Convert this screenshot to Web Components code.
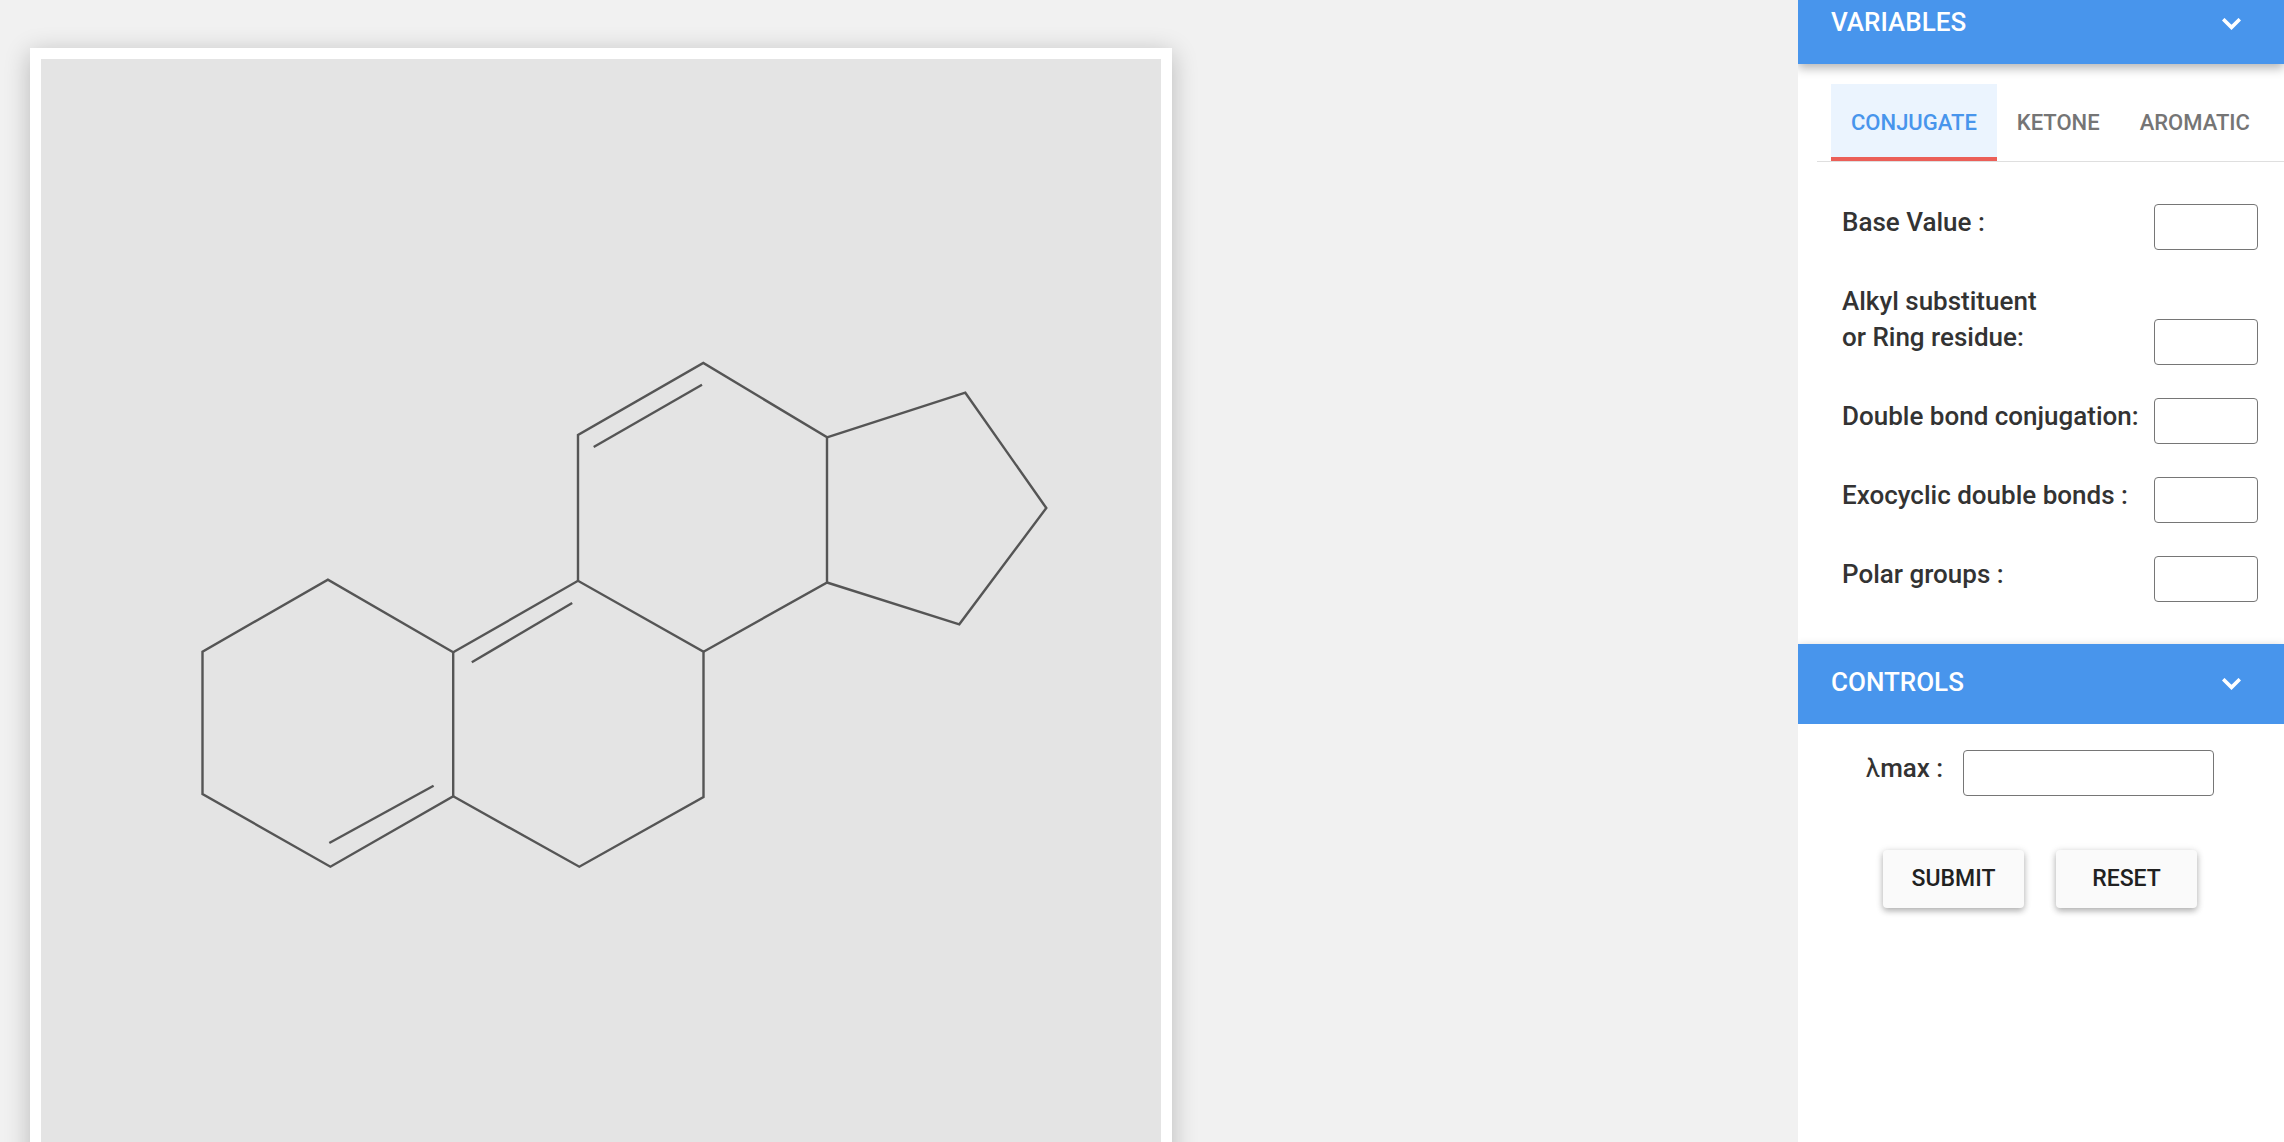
<!DOCTYPE html>
<html lang="en">
<head>
<meta charset="utf-8">
<title>Molecule workbench</title>
<style>
  html, body { height: 100%; }
  body {
    margin: 0;
    overflow: hidden;
    background: #f1f1f1;
    color: #333;
    font-family: Roboto, sans-serif;
    font-weight: 500;
    font-size: 26px;
    line-height: 36px;
  }
</style>
</head>
<body>
<lab-app></lab-app>

<script>
const define = (name, html, setup) => {
  const template = document.createElement('template');
  template.innerHTML = `<style>*, ::before, ::after { box-sizing: border-box; }</style>` + html;
  customElements.define(name, class extends HTMLElement {
    constructor() {
      super();
      this.attachShadow({ mode: 'open' }).append(template.content.cloneNode(true));
    }
    connectedCallback() {
      if (setup) setup(this, this.shadowRoot);
    }
  });
};

/* Square drawing sheet with the steroid skeleton */
define('molecule-board', `
  <style>
    :host {
      display: block;
      width: 50%;
      background: #e4e4e4;
      border: 11px solid #fff;
      box-shadow: 0 5px 24px rgba(0,0,0,.24);
      box-sizing: border-box;
    }
    svg { display: block; width: 100%; }
    path { fill: none; stroke: #555; stroke-width: 2.4; }
  </style>
  <svg viewBox="41 59 1120 1120" role="img" aria-label="Molecule">
    <path d="M453.2 652.3 327.9 579.7 202.5 651.7V794L330.4 866.7 453.2 796.3Z"/>
    <path d="M329.3 843 433.6 785.7"/>
    <path d="M453.2 652.3 578 580.8 703.5 651.8V797L579.3 866.7 453.2 796.3"/>
    <path d="M471.8 662.3 572.2 603"/>
    <path d="M578 580.8V435L703.3 363 827 437.3V582.5L703.5 651.8"/>
    <path d="M593.7 447 702 384.7"/>
    <path d="M827 437.3 965.3 392.7 1046.3 508 959.3 624.3 827 582.5"/>
  </svg>
`);

/* Panel section: blue bar and its body */
define('panel-section', `
  <style>
    :host { display: block; }
    button {
      display: flex;
      justify-content: space-between;
      align-items: center;
      width: 100%;
      height: 80px;
      padding: 0 43px 4px 33px;
      border: 0;
      background: #4895ec;
      color: #fff;
      font: inherit;
      text-align: left;
      box-shadow: 0 4px 10px rgba(0,0,0,.3);
    }
    svg { display: block; width: 19px; height: 12px; margin-top: 4px; }
    path { fill: none; stroke: #fff; stroke-width: 3.6; }
    .body { background: #fff; }
    :host([raised]) button { position: relative; }
    :host(:not([raised])) .body { position: relative; }
  </style>
  <button type="button" aria-expanded="true">
    <span><slot name="title"></slot></span>
    <svg viewBox="0 0 19 12" aria-hidden="true"><path d="M1.2 1.2 9.5 9.4 17.8 1.2"/></svg>
  </button>
  <div class="body"><slot></slot></div>
`);

define('tab-strip', `
  <style>
    :host {
      display: flex;
      margin-left: 19px;
      padding: 20px 0 0 14px;
      border-bottom: 1px solid #dfdfdf;
    }
  </style>
  <slot></slot>
`, el => el.setAttribute('role', 'tablist'));

define('tab-item', `
  <style>
    :host { display: block; }
    button {
      height: 77px;
      padding: 4px 20px 0;
      border: 0;
      border-bottom: 4px solid transparent;
      background: none;
      color: #757575;
      font: inherit;
      font-size: 22px;
    }
    :host([selected]) button {
      border-color: #eb5f58;
      background: #ebf4fe;
      color: #4895ec;
    }
  </style>
  <button type="button" role="tab"><slot></slot></button>
`, (el, root) => root.querySelector('button').setAttribute('aria-selected', el.hasAttribute('selected')));

/* Caption with its text box */
define('value-field', `
  <style>
    :host { display: block; }
    div { display: flex; justify-content: space-between; align-items: flex-end; }
    label { padding-bottom: 10px; white-space: pre-line; }
    i { font-style: normal; font-weight: 400; }
    input {
      width: 104px;
      height: 46px;
      padding: 2px 8px;
      border: 1px solid #767676;
      border-radius: 4px;
      background: #fff;
      font: inherit;
    }
    :host([wide]) div { justify-content: center; gap: 20px; }
    :host([wide]) input { width: 251px; }
  </style>
  <div><label for="value"></label><input id="value" type="text"></div>
`, (el, root) => {
  const label = root.querySelector('label');
  const symbol = el.getAttribute('symbol');
  if (symbol) {
    const i = document.createElement('i');
    i.textContent = symbol;
    label.append(i);
  }
  label.append(el.getAttribute('label').replace('|', '\n'));
});

define('raised-button', `
  <style>
    :host { display: block; }
    button {
      width: 141px;
      height: 58px;
      padding: 0;
      border: 0;
      border-radius: 4px;
      background: #fafafa;
      color: #212121;
      font: inherit;
      font-size: 23px;
      box-shadow: 0 3px 6px rgba(0,0,0,.26), 0 1px 9px rgba(0,0,0,.1);
    }
  </style>
  <button type="button"><slot></slot></button>
`);

define('side-panel', `
  <style>
    :host {
      display: block;
      flex: none;
      width: 486px;
      background: #fff;
      overflow: hidden;
    }
    .scrolled { margin-top: -16px; }
    .fields { display: grid; gap: 33px; padding: 42px 26px 42px 44px; }
    .controls { padding: 26px 2px 40px 0; }
    .actions { display: flex; justify-content: center; gap: 32px; padding-top: 54px; }
  </style>
  <div class="scrolled">
    <panel-section raised>
      <span slot="title">VARIABLES</span>
      <tab-strip>
        <tab-item selected>CONJUGATE</tab-item>
        <tab-item>KETONE</tab-item>
        <tab-item>AROMATIC</tab-item>
      </tab-strip>
      <div class="fields">
        <value-field label="Base Value :"></value-field>
        <value-field label="Alkyl substituent|or Ring residue:"></value-field>
        <value-field label="Double bond conjugation:"></value-field>
        <value-field label="Exocyclic double bonds :"></value-field>
        <value-field label="Polar groups :"></value-field>
      </div>
    </panel-section>
    <panel-section>
      <span slot="title">CONTROLS</span>
      <div class="controls">
        <value-field wide symbol="λ" label="max :"></value-field>
        <div class="actions">
          <raised-button>SUBMIT</raised-button>
          <raised-button>RESET</raised-button>
        </div>
      </div>
    </panel-section>
  </div>
`);

define('lab-app', `
  <style>
    :host { display: flex; height: 100vh; overflow: hidden; }
    main { flex: 1; min-width: 0; padding: 48px 0 0 30px; }
    molecule-board { width: 50vw; }
  </style>
  <main><molecule-board></molecule-board></main>
  <side-panel></side-panel>
`);
</script>
</body>
</html>
